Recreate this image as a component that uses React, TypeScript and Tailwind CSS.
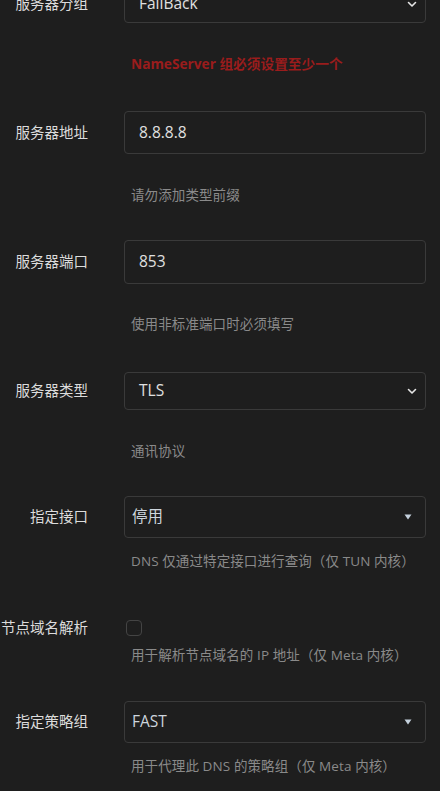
import type { ReactNode } from 'react';

const font = { fontFamily: '"Open Sans", "Noto Sans CJK SC", sans-serif' };

function Chevron() {
    return (
        <svg width="10" height="7" viewBox="0 0 10 7" className="text-[#e6e6e6]">
            <path d="M1.5 1.5 L5 5 L8.5 1.5" fill="none" stroke="currentColor" strokeWidth="1.6" strokeLinecap="round" strokeLinejoin="round" />
        </svg>
    );
}

function Caret() {
    return (
        <svg width="8" height="6" viewBox="0 0 8 6" className="text-[#c4d0dc]">
            <path d="M0.5 0.5 L7.5 0.5 L4 5.5 Z" fill="currentColor" />
        </svg>
    );
}

interface RowProps {
    label: string;
    children: ReactNode;
    className?: string;
}

function Row({ label, children, className }: RowProps) {
    return (
        <div className={`flex items-center ${className ?? ''}`}>
            <div className="w-[88px] shrink-0 text-right text-[14.5px] leading-5 whitespace-nowrap text-[#dcdcdc]">{label}</div>
            <div className="ml-[36px] flex-1 pr-[14px]">{children}</div>
        </div>
    );
}

function Help({ text, className }: { text: string; className?: string }) {
    return <div className={`pl-[131px] text-[13.5px] leading-5 tracking-[0.1px] text-[#8a8a8a] ${className ?? ''}`}>{text}</div>;
}

function Box({ value, h, icon, textClass }: { value: string; h: string; icon?: ReactNode; textClass: string }) {
    return (
        <div className={`flex items-center justify-between rounded-[4px] border border-[#3a3a3a] bg-[#1e1e1e] ${h} ${textClass}`}>
            <span className="text-[15.5px]">{value}</span>
            {icon}
        </div>
    );
}

export default function App() {
    return (
        <div className="min-h-[791px] w-[440px] overflow-hidden bg-[#1e1e1e]" style={font}>
            <Row label="服务器分组" className="-mt-[15px]">
                <Box value="FallBack" h="h-[38px]" textClass="pl-[14px] pr-[8px] text-[#e0e0e0]" icon={<Chevron />} />
            </Row>
            <div className="mt-[31px] pl-[131px] text-[13.7px] leading-5 font-bold text-[#9a1c1c]">NameServer 组必须设置至少一个</div>

            <Row label="服务器地址" className="mt-[37px]">
                <Box value="8.8.8.8" h="h-[43px]" textClass="pl-[14px] text-[#e0e0e0]" />
            </Row>
            <Help text="请勿添加类型前缀" className="mt-[31px]" />

            <Row label="服务器端口" className="mt-[35px]">
                <Box value="853" h="h-[44px]" textClass="pl-[14px] text-[#e0e0e0]" />
            </Row>
            <Help text="使用非标准端口时必须填写" className="mt-[30px]" />

            <Row label="服务器类型" className="mt-[38px]">
                <Box value="TLS" h="h-[38px]" textClass="pl-[14px] pr-[8px] text-[#e0e0e0]" icon={<Chevron />} />
            </Row>
            <Help text="通讯协议" className="mt-[31px]" />

            <Row label="指定接口" className="mt-[35px]">
                <Box value="停用" h="h-[42px]" textClass="pl-[7px] pr-[13px] text-[#cdd5dd]" icon={<Caret />} />
            </Row>
            <Help text="DNS 仅通过特定接口进行查询（仅 TUN 内核）" className="mt-[13px]" />

            <Row label="节点域名解析" className="mt-[47px]">
                <div className="ml-[2px] h-4 w-4 rounded-[4px] border border-[#444]" />
            </Row>
            <Help text="用于解析节点域名的 IP 地址（仅 Meta 内核）" className="mt-[7px]" />

            <Row label="指定策略组" className="mt-[36px]">
                <Box value="FAST" h="h-[42px]" textClass="pl-[7px] pr-[13px] text-[#cdd5dd]" icon={<Caret />} />
            </Row>
            <Help text="用于代理此 DNS 的策略组（仅 Meta 内核）" className="mt-[13px]" />
        </div>
    );
}
